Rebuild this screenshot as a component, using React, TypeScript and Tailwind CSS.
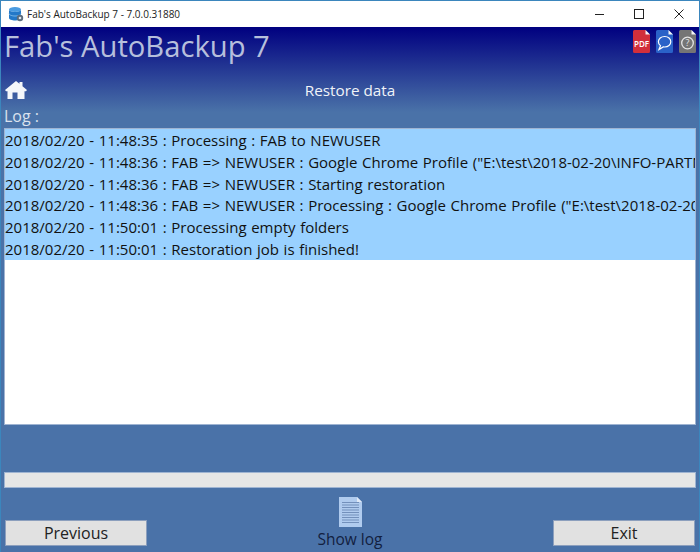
const logLines = [
  "2018/02/20 - 11:48:35 : Processing : FAB to NEWUSER",
  '2018/02/20 - 11:48:36 : FAB => NEWUSER : Google Chrome Profile ("E:\\test\\2018-02-20\\INFO-PARTNER\\FAB\\Google Chrome Profile")',
  "2018/02/20 - 11:48:36 : FAB => NEWUSER : Starting restoration",
  '2018/02/20 - 11:48:36 : FAB => NEWUSER : Processing : Google Chrome Profile ("E:\\test\\2018-02-20\\INFO-PARTNER\\FAB")',
  "2018/02/20 - 11:50:01 : Processing empty folders",
  "2018/02/20 - 11:50:01 : Restoration job is finished!",
];

function DocBadge({ color, children }: { color: string; children: React.ReactNode }) {
  return (
    <svg width="17" height="23" viewBox="0 0 17 23">
      <path d="M1.5 0H12.5L17 4.5V21.5A1.5 1.5 0 0 1 15.5 23H1.5A1.5 1.5 0 0 1 0 21.5V1.5A1.5 1.5 0 0 1 1.5 0Z" fill={color} />
      <path d="M12.5 0L17 4.5H12.5Z" fill="#f2f4f8" />
      {children}
    </svg>
  );
}

function AppIcon() {
  return (
    <svg width="16" height="16" viewBox="0 0 16 16">
      <ellipse cx="7" cy="3.5" rx="6" ry="2.5" fill="#4a9be0" />
      <path d="M1 3.5V12C1 13.5 4 14.5 7 14.5S13 13.5 13 12V3.5C13 5 10 6 7 6S1 5 1 3.5Z" fill="#2378c8" />
      <path d="M1 7.5C1 9 4 10 7 10S13 9 13 7.5" fill="none" stroke="#8cc3ee" strokeWidth="0.8" />
      <circle cx="12" cy="12" r="3.2" fill="#5b6b7c" />
      <circle cx="12" cy="12" r="1.3" fill="#dfe6ee" />
    </svg>
  );
}

function HomeIcon() {
  return (
    <svg width="22" height="18" viewBox="0 0 22 18" fill="#f4f6fa">
      <path d="M11 0L14.5 2.8V1H17.5V5.2L22 9L21 10.2H19.5V18H12.5V11.5H7.5V18H2.5V10.2H1L0 9Z" />
    </svg>
  );
}

function ActionButton({ label }: { label: string }) {
  return (
    <button
      type="button"
      className="flex h-[26px] w-[142px] items-center justify-center border border-[#8c9fbd] bg-[#e1e1e1] text-[16px] text-[#222]"
    >
      {label}
    </button>
  );
}

export default function App() {
  return (
    <div className="flex h-[552px] w-[700px] flex-col overflow-hidden border-x border-t border-[#3b86bd] bg-[#4870a8] font-['Open_Sans','Noto_Sans',sans-serif]">
      <div className="flex h-[26px] shrink-0 items-center bg-white pl-[7px] text-[10px] text-[#222]">
        <AppIcon />
        <span className="ml-[3px]">Fab's AutoBackup 7 - 7.0.0.31880</span>
        <div className="ml-auto flex h-full items-center">
          <div className="flex w-[40px] justify-center">
            <svg width="9" height="9" viewBox="0 0 9 9">
              <path d="M0 4.5H9" stroke="#222" strokeWidth="1" />
            </svg>
          </div>
          <div className="flex w-[40px] justify-center">
            <svg width="10" height="10" viewBox="0 0 10 10">
              <rect x="0.5" y="0.5" width="9" height="9" fill="none" stroke="#222" strokeWidth="1" />
            </svg>
          </div>
          <div className="flex w-[40px] justify-center">
            <svg width="10" height="10" viewBox="0 0 10 10">
              <path d="M0.5 0.5L9.5 9.5M9.5 0.5L0.5 9.5" stroke="#222" strokeWidth="1" />
            </svg>
          </div>
        </div>
      </div>

      <div className="flex min-h-0 flex-1 flex-col bg-[linear-gradient(#000080_0,#4a72a8_85px)] px-[3px]">
        <div className="flex h-[46px] shrink-0 items-start justify-between">
          <h1 className="text-[29.2px] leading-[38px] font-normal text-[#b6bfdc]">Fab's AutoBackup 7</h1>
          <div className="mt-[3px] flex gap-[6px]">
            <DocBadge color="#d22f3b">
              <text x="8.5" y="17" textAnchor="middle" fontSize="8" fontWeight="600" fill="#fff" fontFamily="Open Sans">PDF</text>
            </DocBadge>
            <DocBadge color="#2a62c8">
              <path d="M8.7 6.5C5 6.5 2.4 8.8 2.4 11.8C2.4 13.5 3.2 14.9 4.5 15.8L3 19.5L7.2 16.9C7.7 17 8.2 17 8.7 17C12.2 17 14.8 14.8 14.8 11.8C14.8 8.8 12.2 6.5 8.7 6.5Z" fill="none" stroke="#fff" strokeWidth="1.2" />
            </DocBadge>
            <DocBadge color="#757575">
              <circle cx="8.5" cy="13" r="5.8" fill="none" stroke="#e6e6e6" strokeWidth="1.3" />
              <text x="8.5" y="16.2" textAnchor="middle" fontSize="9" fill="#e6e6e6" fontFamily="Open Sans">?</text>
            </DocBadge>
          </div>
        </div>

        <div className="relative flex h-[32px] shrink-0 items-center justify-center pt-[3px]">
          <div className="absolute left-[1px] top-[8px]">
            <HomeIcon />
          </div>
          <span className="text-[15.3px] text-[#f0f3f8]">Restore data</span>
        </div>

        <div className="h-[23px] shrink-0 text-[16px] leading-[22px] text-[#dbe2ee]">Log :</div>

        <div className="h-[297px] shrink-0 overflow-hidden border border-[#9fb4d2] bg-white">
          <ul className="bg-[#99d1ff]">
            {logLines.map((line) => (
              <li key={line} className="h-[21.8px] text-[15px] leading-[22px] [word-spacing:0.75px] whitespace-nowrap text-[#111]">
                {line}
              </li>
            ))}
          </ul>
        </div>

        <div className="mt-[47px] h-[16px] shrink-0 border border-[#9fb4d2] bg-[#e6e6e6]" />

        <div className="mt-[9px] flex items-end justify-between px-[1px]">
          <div className="mb-[6px]">
            <ActionButton label="Previous" />
          </div>
          <div className="flex flex-col items-center">
            <svg width="23" height="30" viewBox="0 0 23 30">
              <path d="M0 0H18L23 5V30H0Z" fill="#b0cbee" />
              <path d="M18 0L23 5H18Z" fill="#dfe8f5" />
              <path d="M3 5.5H20M3 8H20M3 10.5H20M3 13H20M3 15.5H20M3 18H20M3 20.5H20M3 23H20M3 25.5H20" stroke="#7390bb" strokeWidth="1" />
            </svg>
            <span className="text-[15.5px] leading-[25px] text-[#12203f]">Show log</span>
          </div>
          <div className="mb-[6px]">
            <ActionButton label="Exit" />
          </div>
        </div>
      </div>
    </div>
  );
}
